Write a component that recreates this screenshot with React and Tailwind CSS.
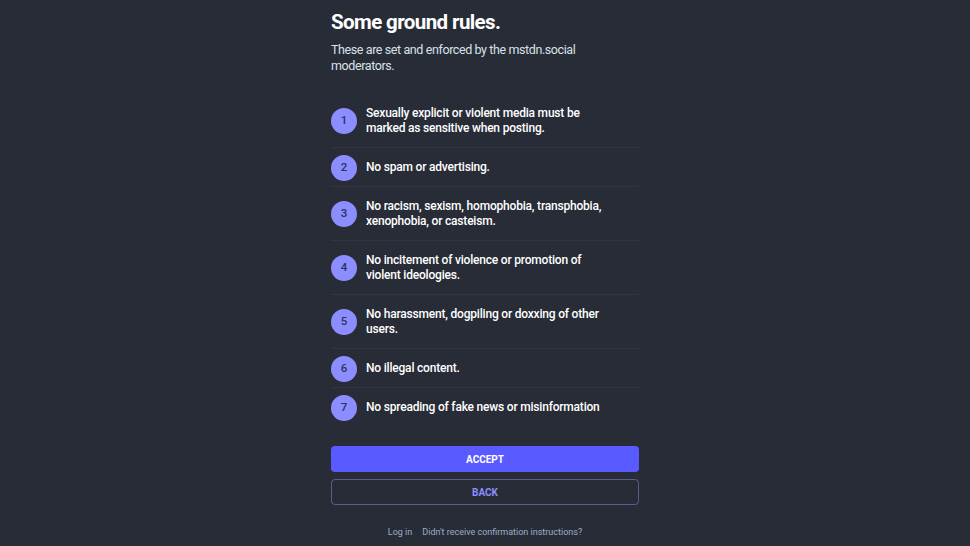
const rules = [
  "Sexually explicit or violent media must be marked as sensitive when posting.",
  "No spam or advertising.",
  "No racism, sexism, homophobia, transphobia, xenophobia, or casteism.",
  "No incitement of violence or promotion of violent ideologies.",
  "No harassment, dogpiling or doxxing of other users.",
  "No illegal content.",
  "No spreading of fake news or misinformation",
];

export default function App() {
  return (
    <div
      className="min-h-[546px] w-full bg-[#282c37] text-white"
      style={{ fontFamily: "Roboto, 'Liberation Sans', sans-serif" }}
    >
      <div className="mx-auto w-[308px] pt-[9px]">
        <h1 className="text-[20.5px] leading-[26px] font-bold tracking-[-0.6px] text-white">
          Some ground rules.
        </h1>
        <p className="mt-[7px] pr-[40px] text-[12.5px] leading-[16px] tracking-[-0.4px] text-[#d9e1e8]">
          These are set and enforced by the mstdn.social moderators.
        </p>

        <ul className="mt-[20px]">
          {rules.map((rule, i) => (
            <li
              key={i}
              className={
                "flex items-center gap-[9px] pt-[12px] pb-[11px] " +
                (i < rules.length - 1 ? "border-b border-[#313543]" : "")
              }
            >
              <span className="-my-[6px] flex h-[26px] w-[26px] shrink-0 items-center justify-center rounded-full bg-[#8c8dff] text-[11.5px] font-medium text-[#2f3160]">
                {i + 1}
              </span>
              <span className="pr-[28px] text-[12px] leading-[15px] font-medium tracking-[-0.2px] text-white">
                {rule}
              </span>
            </li>
          ))}
        </ul>

        <button className="mt-[20px] flex h-[26px] w-full items-center justify-center rounded-[4px] bg-[#595aff] text-[10px] font-bold uppercase text-white">
          Accept
        </button>
        <button className="mt-[7px] flex h-[26px] w-full items-center justify-center rounded-[4px] border border-[#5a5c8f] text-[10px] font-bold uppercase text-[#8c8dff]">
          Back
        </button>

        <div className="mt-[20px] flex justify-center gap-[10px] text-[9px] leading-[14px] text-[#9baec8]">
          <a href="#">Log in</a>
          <a href="#">Didn't receive confirmation instructions?</a>
        </div>
      </div>
    </div>
  );
}
